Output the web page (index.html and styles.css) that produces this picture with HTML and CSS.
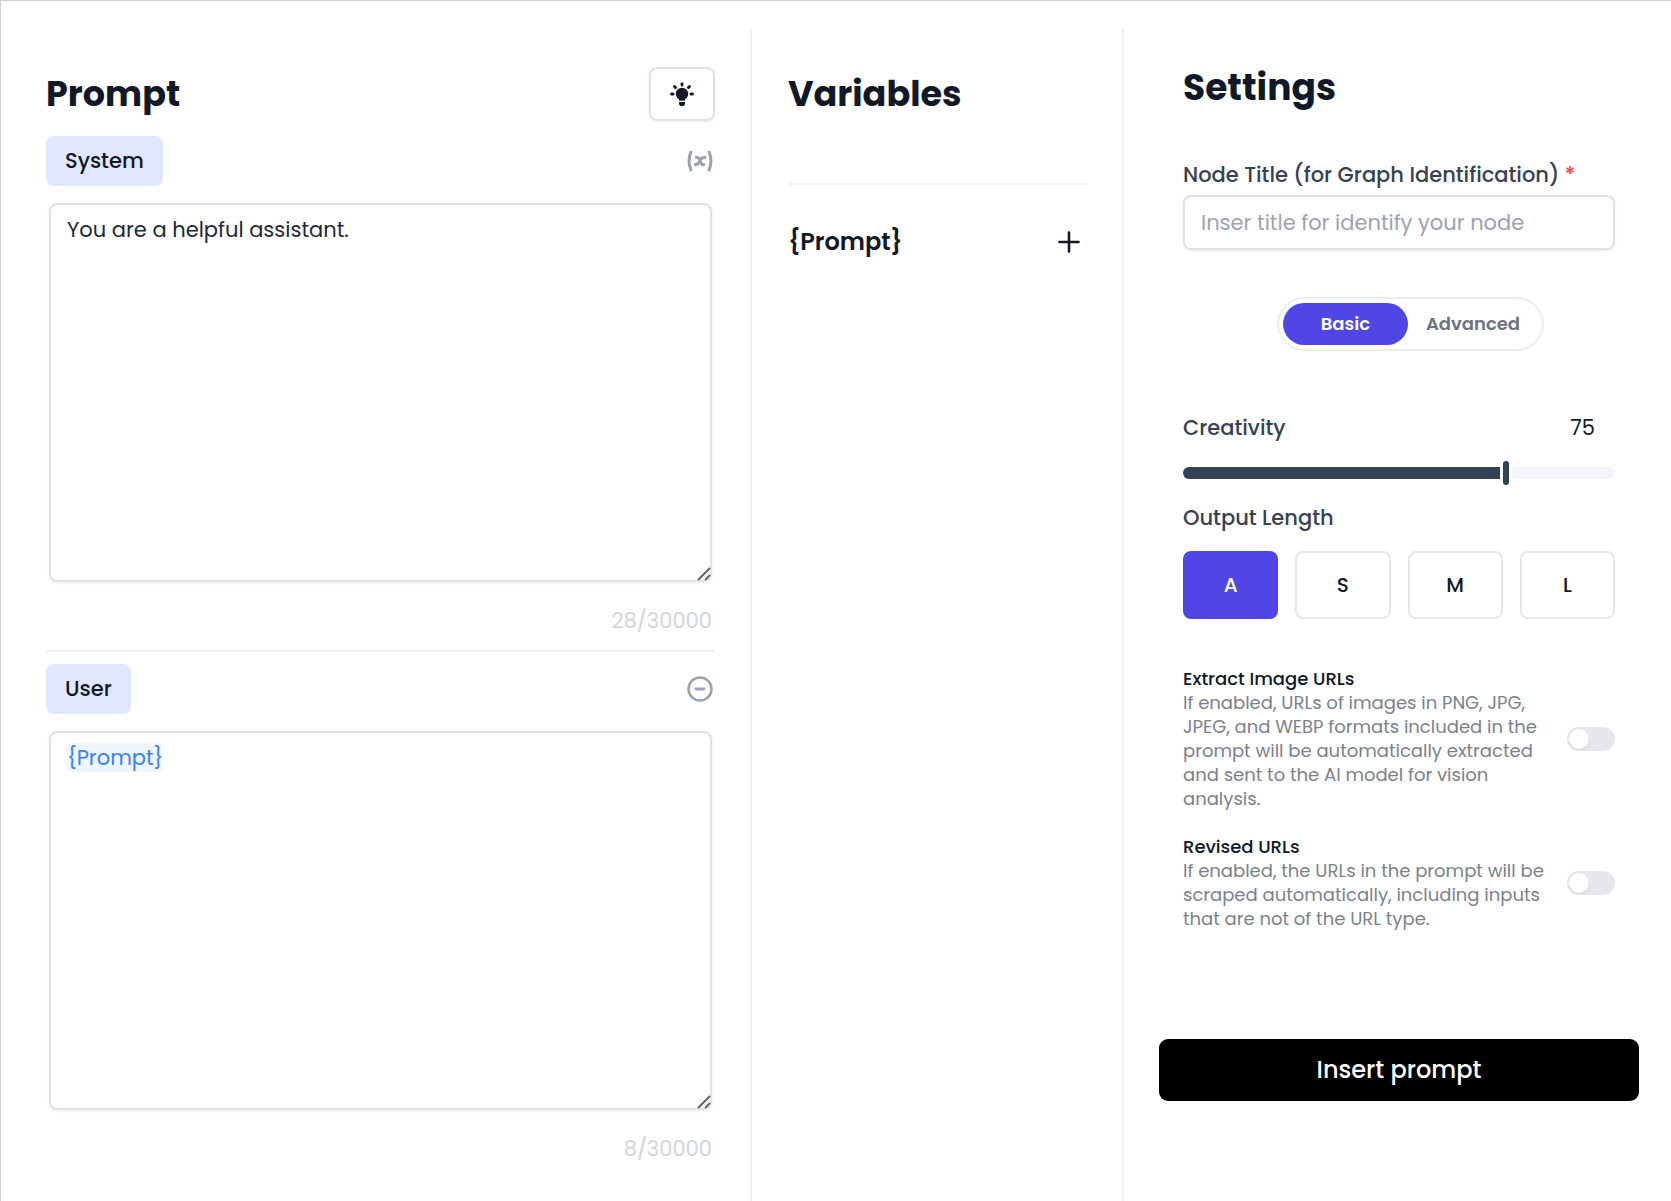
FILE: index.html
```html
<!DOCTYPE html>
<html lang="en">
<head>
    <meta charset="UTF-8">
    <meta name="viewport" content="width=device-width, initial-scale=1.0">
    <title>Prompt node</title>
    <link rel="stylesheet" href="styles.css">
</head>
<body>
    <main class="editor">
        <section class="column prompt-column">
            <div class="title-row">
                <h1>Prompt</h1>
                <button class="hint-btn" type="button" aria-label="Prompt ideas">
                    <svg width="26" height="26" viewBox="0 0 26 26" fill="#111827">
                        <circle cx="13" cy="13" r="6.2"/>
                        <path d="M10 17h6v3h-6z"/>
                        <path d="M10 21h6v1.2a3 3 0 0 1-6 0z"/>
                        <g stroke="#111827" stroke-width="3" stroke-linecap="round">
                            <path d="M13 2.700v1.300M2.600 13h1.400M22 13h1.400M5.500 5.500l1 1M20.500 5.500l-1 1"/>
                        </g>
                        <path d="M9.500 20.200h7" stroke="#fff" stroke-width="1"/>
                    </svg>
                </button>
            </div>

            <div class="message">
                <div class="message-head">
                    <label class="role" for="system">System</label>
                    <button class="icon-btn" type="button" aria-label="Insert variable">
                        <svg width="26" height="26" viewBox="0 0 26 26" fill="none" stroke="#9ca3af" stroke-width="3" stroke-linecap="round" stroke-linejoin="round">
                            <path d="M4 4c-2.600 5-2.600 12.500 0 18M22 4c2.600 5 2.600 12.500 0 18"/>
                            <path d="M9.300 9.300c1.400-.3 2.300.2 2.900 1.600l1.700 4c.6 1.400 1.500 2 3 1.700M18 9.500c-2.800-.4-4 1.200-5 3.300s-2.200 4-4.800 3.600"/>
                        </svg>
                    </button>
                </div>
                <div class="box">
                    <textarea id="system">You are a helpful assistant.</textarea>
                    <svg class="grip" width="14" height="14" viewBox="0 0 14 14" fill="none" stroke="#666" stroke-width="2"><path d="M1 13L13 1M8 13l5-5"/></svg>
                </div>
                <p class="counter">28/30000</p>
            </div>

            <hr>

            <div class="message">
                <div class="message-head">
                    <label class="role" for="user">User</label>
                    <button class="icon-btn" type="button" aria-label="Remove message">
                        <svg width="26" height="26" viewBox="0 0 26 26" fill="none" stroke="#9ca3af" stroke-width="2.500" stroke-linecap="round">
                            <circle cx="13" cy="13" r="11.500"/>
                            <path d="M9 13h8" stroke-width="2.800"/>
                        </svg>
                    </button>
                </div>
                <div class="box">
                    <span class="highlight"></span>
                    <textarea id="user" class="has-variable">{Prompt}</textarea>
                    <svg class="grip" width="14" height="14" viewBox="0 0 14 14" fill="none" stroke="#666" stroke-width="2"><path d="M1 13L13 1M8 13l5-5"/></svg>
                </div>
                <p class="counter">8/30000</p>
            </div>
        </section>

        <section class="column variables-column">
            <div class="title-row">
                <h1>Variables</h1>
            </div>
            <hr>
            <div class="variable">
                <h2>{Prompt}</h2>
                <button class="icon-btn" type="button" aria-label="Add variable">
                    <svg width="22" height="22" viewBox="0 0 22 22" fill="none" stroke="#111827" stroke-width="2.600" stroke-linecap="round">
                        <path d="M11 1.500v19M1.500 11h19"/>
                    </svg>
                </button>
            </div>
        </section>

        <section class="column settings-column">
            <div class="settings">
                <h1>Settings</h1>

                <label class="field-label" for="nodeTitle">Node Title (for Graph Identification) <span class="required">*</span></label>
                <input type="text" id="nodeTitle" class="text-input" placeholder="Inser title for identify your node">

                <div class="tabs">
                    <button type="button" class="tab active">Basic</button>
                    <button type="button" class="tab">Advanced</button>
                </div>

                <div class="slider-head">
                    <label class="field-label" for="creativity">Creativity</label>
                    <output id="creativityValue" for="creativity">75</output>
                </div>
                <input type="range" id="creativity" class="slider" min="0" max="100" value="75">

                <p class="field-label">Output Length</p>
                <div class="lengths">
                    <button type="button" class="length active">A</button>
                    <button type="button" class="length">S</button>
                    <button type="button" class="length">M</button>
                    <button type="button" class="length">L</button>
                </div>

                <div class="option">
                    <div class="option-text">
                        <label for="extract">Extract Image URLs</label>
                        <p>If enabled, URLs of images in PNG, JPG, JPEG, and WEBP formats included in the prompt will be automatically extracted and sent to the AI model for vision analysis.</p>
                    </div>
                    <input type="checkbox" id="extract" class="switch">
                </div>
                <div class="option">
                    <div class="option-text">
                        <label for="revised">Revised URLs</label>
                        <p>If enabled, the URLs in the prompt will be scraped automatically, including inputs that are not of the URL type.</p>
                    </div>
                    <input type="checkbox" id="revised" class="switch">
                </div>
            </div>

            <button type="button" class="submit">Insert prompt</button>
        </section>
    </main>
</body>
</html>
```
FILE: styles.css
```css
* {
    box-sizing: border-box;
    margin: 0;
    padding: 0;
}

body {
    min-height: 100vh;
    padding-top: 27px;
    border-top: 1px solid #d0d0d0;
    border-left: 1px solid #d0d0d0;
    background: #fff;
    color: #111827;
    font-family: Poppins, Inter, sans-serif;
    font-size: 21px;
    line-height: 30px;
}

button, input, textarea {
    font: inherit;
    color: inherit;
}

button {
    border: none;
    background: none;
    cursor: pointer;
}

svg {
    display: block;
}

h1 {
    font-size: 36px;
    line-height: 54px;
    font-weight: 700;
}

h2 {
    font-size: 24px;
    line-height: 36px;
    font-weight: 600;
}

hr {
    border: none;
    border-top: 2px solid #f1f1f2;
}

/* Columns */
.editor {
    display: grid;
    grid-template-columns: 751fr 372fr 547fr;
    min-height: calc(100vh - 28px);
}

.column {
    min-width: 0;
}

.prompt-column {
    padding: 39px 35px 0 45px;
    border-right: 2px solid #f1f1f2;
}

.variables-column {
    padding: 39px 35px 0 36px;
    border-right: 2px solid #f1f1f2;
}

.settings-column {
    padding: 33px 32px 0 35px;
}

.title-row {
    display: flex;
    justify-content: space-between;
    align-items: center;
}

.title-row h1 {
    font-size: 35px;
}

.hint-btn {
    display: flex;
    align-items: center;
    justify-content: center;
    width: 66px;
    height: 54px;
    border: 2px solid #dfe2e7;
    border-radius: 8px;
    box-shadow: 0 1px 3px rgba(0, 0, 0, 0.08);
}

/* Messages */
.message {
    padding-top: 15px;
}

hr + .message {
    padding-top: 12px;
}

.message-head {
    display: flex;
    justify-content: space-between;
    align-items: center;
    padding-right: 2px;
}

.role {
    padding: 10px 19px;
    border-radius: 8px;
    background: #e0e7ff;
    font-weight: 500;
}

.box {
    position: relative;
    margin: 17px 3px 0;
}

textarea {
    position: relative;
    display: block;
    width: 100%;
    height: 379px;
    padding: 10px 16px;
    border: 2px solid #dfe2e7;
    border-radius: 8px;
    box-shadow: 0 1px 3px rgba(0, 0, 0, 0.08);
    background: transparent;
    color: #1f2937;
    resize: none;
    outline: none;
}

.has-variable {
    color: #3b82f6;
}

/* sits behind the variable name in the text box */
.highlight {
    position: absolute;
    top: 12px;
    left: 18px;
    width: 95px;
    height: 29px;
    border-radius: 4px;
    background: #eff6ff;
}

.grip {
    position: absolute;
    right: 1px;
    bottom: 1px;
    pointer-events: none;
}

.counter {
    padding: 24px 3px 14px 0;
    color: #d1d5db;
    text-align: right;
}

/* Variables */
.variables-column hr {
    margin-top: 62px;
}

.variable {
    display: flex;
    justify-content: space-between;
    align-items: center;
    padding: 39px 7px 0 0;
}

/* Settings */
.settings {
    padding: 0 24px;
}

.field-label {
    display: block;
    color: #374151;
    font-weight: 500;
}

.settings h1 + .field-label {
    margin-top: 45px;
}

.required {
    color: #ef4444;
}

.text-input {
    display: block;
    width: 100%;
    height: 55px;
    margin-top: 5px;
    padding: 0 16px;
    border: 2px solid #dfe2e7;
    border-radius: 8px;
    box-shadow: 0 1px 3px rgba(0, 0, 0, 0.08);
}

.text-input::placeholder {
    color: #9ca3af;
}

.tabs {
    display: grid;
    grid-template-columns: 125px 1fr;
    width: 267px;
    margin: 47px 71px 0 auto;
    padding: 4px;
    border: 2px solid #ededf1;
    border-radius: 27px;
}

.tab {
    height: 42px;
    border-radius: 21px;
    color: #6b7280;
    font-size: 18px;
    font-weight: 600;
}

.tab.active {
    background: #4f46e5;
    color: #fff;
}

.slider-head {
    display: flex;
    justify-content: space-between;
    margin-top: 62px;
    padding-right: 20px;
}

.slider {
    display: block;
    width: 100%;
    height: 26px;
    margin: 17px 0;
    background: transparent;
    appearance: none;
}

.slider::-webkit-slider-runnable-track {
    height: 12px;
    border-radius: 6px;
    background: linear-gradient(to right, #334155 75%, #f1f5f9 75%);
}

.slider::-webkit-slider-thumb {
    appearance: none;
    width: 6px;
    height: 24px;
    margin-top: -6px;
    border-radius: 3px;
    background: #334155;
    box-shadow: 0 0 0 3px #fff;
}

.lengths {
    display: grid;
    grid-template-columns: repeat(4, 1fr);
    gap: 17px;
    margin-top: 18px;
    margin-bottom: 48px;
}

.length {
    height: 68px;
    border: 2px solid #e5e7eb;
    border-radius: 8px;
    font-size: 20px;
    font-weight: 500;
}

.length.active {
    border-color: #4f46e5;
    background: #4f46e5;
    color: #fff;
}

.option {
    display: flex;
    justify-content: space-between;
    align-items: center;
    gap: 16px;
    margin-bottom: 24px;
    font-size: 18px;
    line-height: 24px;
}

.option-text label {
    display: block;
    font-weight: 500;
}

.option-text p {
    color: #7b818d;
}

.switch {
    flex: none;
    display: flex;
    align-items: center;
    width: 48px;
    height: 24px;
    padding: 2px;
    border-radius: 12px;
    background: #e5e7eb;
    appearance: none;
    cursor: pointer;
}

.switch::before {
    content: "";
    width: 20px;
    height: 20px;
    border-radius: 50%;
    background: #fff;
    box-shadow: 0 1px 2px rgba(0, 0, 0, 0.1);
}

.switch:checked {
    justify-content: flex-end;
    background: #4f46e5;
}

.submit {
    width: 100%;
    height: 62px;
    margin-top: 84px;
    border-radius: 9px;
    background: #000;
    color: #fff;
    font-size: 24px;
    font-weight: 500;
}
```
